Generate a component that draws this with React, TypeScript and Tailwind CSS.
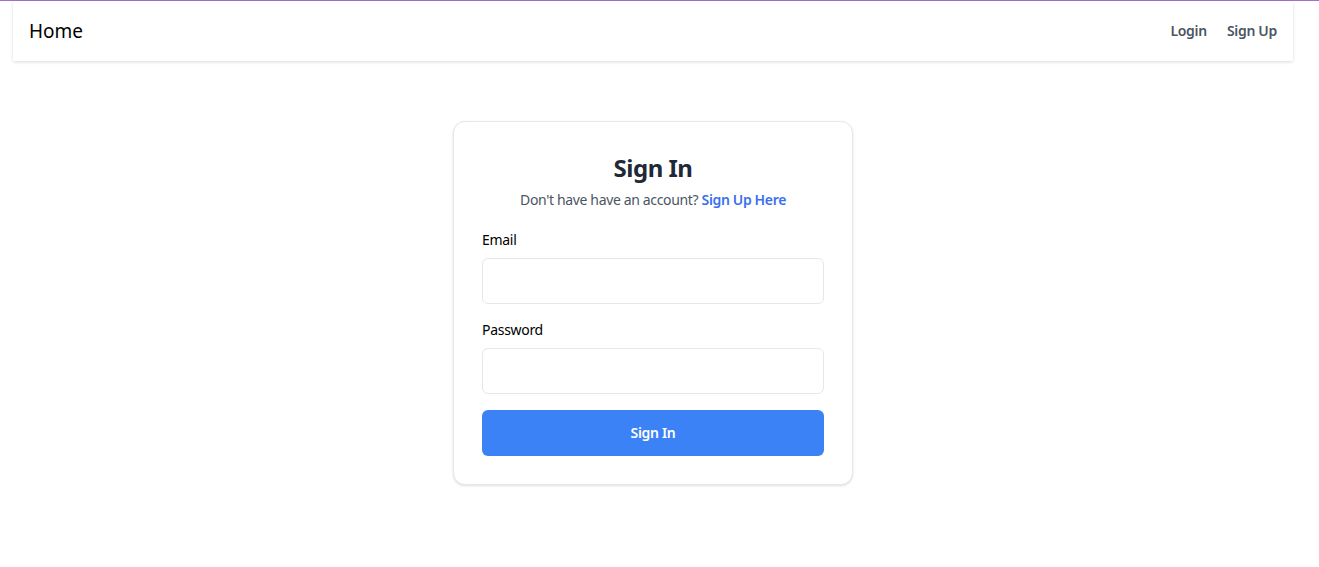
export default function App() {
  return (
    <div className="min-h-[567px] bg-white border-t border-[#a070cc]" style={{ fontFamily: '"Noto Sans", "Open Sans", sans-serif' }}>
      <div className="w-[1306px]">
        <nav className="mx-auto w-[1280px] h-[60px] flex items-center justify-between px-4 bg-white shadow-[0_1px_3px_rgba(0,0,0,0.15)]">
          <span className="text-[19px] text-black">Home</span>
          <div className="flex items-center gap-5 text-sm font-semibold text-[#4b5563] tracking-[-0.3px]">
            <a>Login</a>
            <a>Sign Up</a>
          </div>
        </nav>
        <div className="flex justify-center pt-[60px]">
          <div className="w-[400px] rounded-xl border border-gray-200 bg-white p-7 shadow-sm">
            <h1 className="text-center text-2xl font-bold leading-9 tracking-[-0.5px] text-[#1f2937]">Sign In</h1>
            <p className="mt-1 text-center text-sm leading-5 tracking-[-0.35px] text-[#4b5563]">
              Don't have have an account? <a className="font-semibold text-[#3b6ff0]">Sign Up Here</a>
            </p>
            <label className="mt-5 block text-sm leading-5 tracking-[-0.3px] text-black">Email</label>
            <input className="mt-2 block h-[46px] w-full rounded-md border border-gray-200 px-3 outline-none" />
            <label className="mt-4 block text-sm leading-5 tracking-[-0.3px] text-black">Password</label>
            <input type="password" className="mt-2 block h-[46px] w-full rounded-md border border-gray-200 px-3 outline-none" />
            <button className="mt-4 h-[46px] w-full rounded-md bg-[#3b82f6] text-sm font-semibold tracking-[-0.3px] text-white">Sign In</button>
          </div>
        </div>
      </div>
    </div>
  );
}
